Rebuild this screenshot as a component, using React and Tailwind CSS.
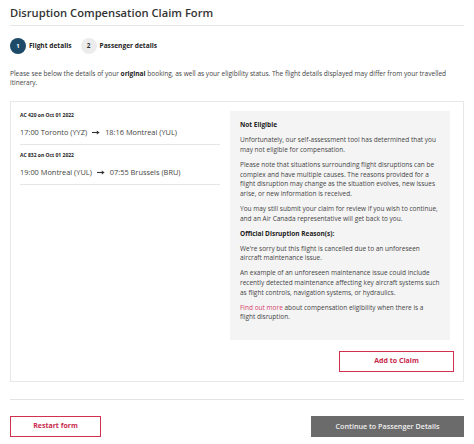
import React from 'react';

const flights = [
  { label: 'AC 420 on Oct 01 2022', from: '17:00 Toronto (YYZ)', to: '18:16 Montreal (YUL)' },
  { label: 'AC 832 on Oct 01 2022', from: '19:00 Montreal (YUL)', to: '07:55 Brussels (BRU)' },
];

function Arrow() {
  return (
    <svg width="8" height="5" viewBox="0 0 8 5" className="mx-[5px]">
      <path d="M0 2.5H5.5" stroke="#333" strokeWidth="1.1" />
      <path d="M4.8 0.6L7.6 2.5L4.8 4.4Z" fill="#333" />
    </svg>
  );
}

export default function App() {
  return (
    <div className="w-[474px] h-[444px] bg-white px-[10px] text-[#333] overflow-hidden" style={{ fontFamily: '"Open Sans", sans-serif' }}>
      {/* HEADER */}
      <h1 className="text-[11.2px] leading-[15px] font-semibold pt-[5px] pb-[5px] border-b border-[#e6e6e6]">
        Disruption Compensation Claim Form
      </h1>

      {/* STEPPER */}
      <div className="mt-[12px] flex items-center h-[16px]">
        <span className="w-[16px] h-[16px] rounded-full bg-[#1c4a68] text-white text-[6px] font-bold flex items-center justify-center">1</span>
        <span className="ml-[3px] text-[6.6px] font-bold text-[#222]">Flight details</span>
        <span className="ml-[9px] w-[16px] h-[16px] rounded-full bg-[#ececec] text-[6.5px] font-bold flex items-center justify-center">2</span>
        <span className="ml-[3px] text-[6.6px] font-bold text-[#222]">Passenger details</span>
      </div>

      <p className="mt-[14.5px] text-[6.55px] leading-[9.3px] text-[#444] pr-[10px]">
        Please see below the details of your <b className="font-bold text-[#222]">original</b> booking, as well as your eligibility status. The flight details displayed may differ from your travelled itinerary.
      </p>

      {/* CARD */}
      <div className="mt-[14px] border border-[#e8e8e8] pt-[9px] pb-[9px] px-[9px]">
        <div className="grid grid-cols-[200px_220px] gap-[10px]">
          <div>
            {flights.map((f, i) => (
              <div key={i} className={`border-b border-[#e6e6e6] pb-[6px] ${i > 0 ? 'pt-[6px]' : ''}`}>
                <div className="text-[5px] leading-[8px] font-bold text-[#222]">{f.label}</div>
                <div className="mt-[8px] text-[7.4px] leading-[11px] text-[#444] flex items-center">
                  <span>{f.from}</span>
                  <Arrow />
                  <span>{f.to}</span>
                </div>
              </div>
            ))}
          </div>

          <div className="bg-[#f4f4f4] px-[10px] pt-[9px] pb-[18px] text-[6.5px] leading-[9.7px] text-[#444] space-y-[5.3px]">
            <p className="font-bold text-[#222]">Not Eligible</p>
            <p>Unfortunately, our self-assessment tool has determined that you may not eligible for compensation.</p>
            <p>Please note that situations surrounding flight disruptions can be complex and have multiple causes. The reasons provided for a flight disruption may change as the situation evolves, new issues arise, or new information is received.</p>
            <p>You may still submit your claim for review if you wish to continue, and an Air Canada representative will get back to you.</p>
            <p className="font-bold text-[#222]">Official Disruption Reason(s):</p>
            <p>We're sorry but this flight is cancelled due to an unforeseen aircraft maintenance issue.</p>
            <p>An example of an unforeseen maintenance issue could include recently detected maintenance affecting key aircraft systems such as flight controls, navigation systems, or hydraulics.</p>
            <p><span className="text-[#d4416b]">Find out more</span> about compensation eligibility when there is a flight disruption.</p>
          </div>
        </div>

        <div className="mt-[11px] flex justify-end">
          <button className="w-[115px] h-[21px] border border-[#d2304f] text-[#c8284a] text-[7px] font-bold">Add to Claim</button>
        </div>
      </div>

      {/* FOOTER */}
      <div className="mt-[17px] border-t border-[#e3e3e3] pt-[16px] flex justify-between">
        <button className="w-[91px] h-[21px] border border-[#d2304f] text-[#c8284a] text-[7px] font-bold">Restart form</button>
        <button className="w-[153px] h-[21px] bg-[#6b6b6b] text-[#f0f0f0] text-[7.2px] font-semibold">Continue to Passenger Details</button>
      </div>
    </div>
  );
}
